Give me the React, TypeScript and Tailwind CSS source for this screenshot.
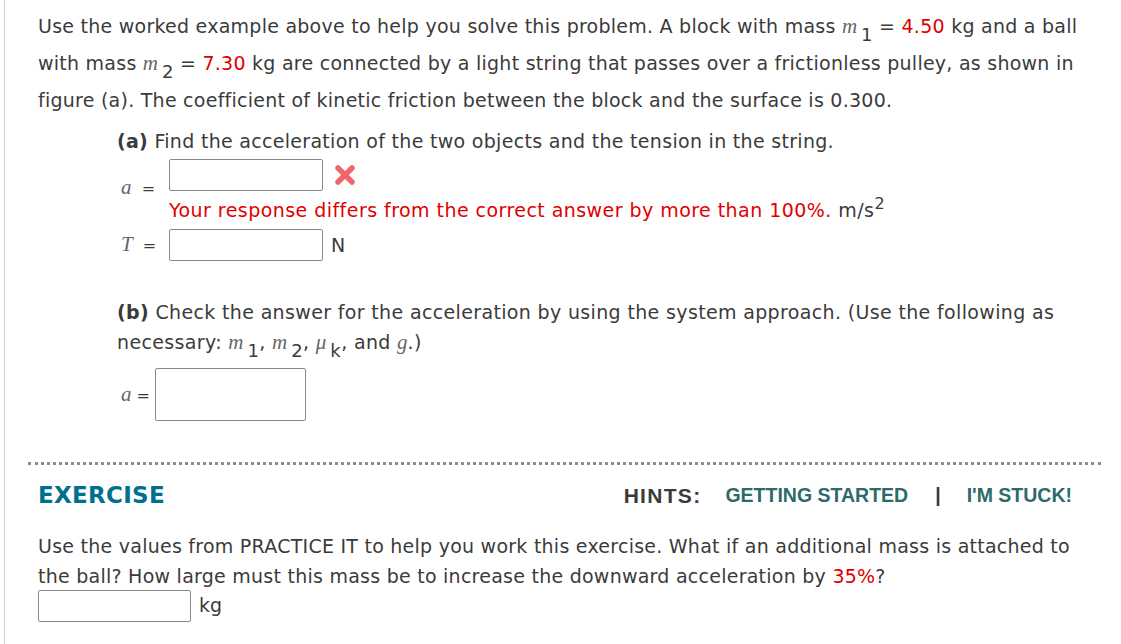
import { ReactNode } from 'react';

// Math variable, italic serif like the MathML output
function V({ children }: { children: ReactNode }) {
  return <span className="font-['Liberation_Serif',serif] italic text-[#666] text-[21px] tracking-normal">{children}</span>;
}

function Sub({ children }: { children: ReactNode }) {
  return <span className="relative top-[8px] text-[18px] ml-[4px]">{children}</span>;
}

function Red({ children }: { children: ReactNode }) {
  return <span className="text-[#e00000]">{children}</span>;
}

function Box({ className = '' }: { className?: string }) {
  return <span className={`inline-block border border-[#8a8a8a] rounded-[2px] bg-white ${className}`} />;
}

function XMark() {
  return (
    <svg width="24" height="22" viewBox="0 0 24 22">
      <path d="M5 4 L19 18 M19 4 L5 18" stroke="#f0666b" strokeWidth="5.5" strokeLinecap="round" />
    </svg>
  );
}

export default function App() {
  return (
    <div className="w-[1121px] h-[644px] bg-white overflow-hidden font-['DejaVu_Sans',sans-serif] text-[19px] text-[#3b3b3b] whitespace-nowrap">
      <div className="ml-[4px] h-full border-l border-[#cfcfcf] pl-[33px] pt-[8px]">
        <p className="leading-[37px] tracking-[0.25px]">
          Use the worked example above to help you solve this problem. A block with mass <V>m</V><Sub>1</Sub> = <Red>4.50</Red> kg and a ball
          <br />
          with mass <V>m</V><Sub>2</Sub> = <Red>7.30</Red> kg are connected by a light string that passes over a frictionless pulley, as shown in
          <br />
          figure (a). The coefficient of kinetic friction between the block and the surface is 0.300.
        </p>

        <div className="pl-[79px] mt-[7px]">
          <p className="leading-[30px] tracking-[0.3px]">
            <b>(a)</b> Find the acceleration of the two objects and the tension in the string.
          </p>

          <div className="flex items-start mt-[3px]">
            <div className="w-[52px] pt-[13px] text-[16px] pl-[4px]">
              <V>a</V>&nbsp;&nbsp;=
            </div>
            <div>
              <div className="flex items-center gap-[10px]">
                <Box className="w-[154px] h-[32px]" />
                <XMark />
              </div>
              <div className="leading-[28px] mt-[5px] tracking-[0.45px]">
                <Red>Your response differs from the correct answer by more than 100%.</Red> m/s<sup className="text-[16px]">2</sup>
              </div>
            </div>
          </div>

          <div className="flex items-center mt-[5px]">
            <div className="w-[52px] text-[16px] pl-[4px]">
              <V>T</V>&nbsp;&nbsp;=
            </div>
            <Box className="w-[154px] h-[32px]" />
            <span className="ml-[8px]">N</span>
          </div>

          <p className="leading-[30px] mt-[36px] tracking-[0.35px]">
            <b>(b)</b> Check the answer for the acceleration by using the system approach. (Use the following as
            <br />
            necessary: <V>m</V><Sub>1</Sub>, <V>m</V><Sub>2</Sub>, <V>μ</V><Sub>k</Sub>, and <V>g</V>.)
          </p>

          <div className="flex items-center mt-[10px]">
            <div className="w-[38px] text-[16px] pl-[4px]">
              <V>a</V> =
            </div>
            <Box className="w-[151px] h-[53px]" />
          </div>
        </div>

        <div className="mt-[41px] -ml-[10px] w-[1073px] border-t-[3px] border-dotted border-[#8c8c8c]" />

        <div className="flex items-center justify-between mt-[13px] w-[1034px]">
          <span className="font-bold text-[23px] tracking-[0.3px] text-[#00708e]">EXERCISE</span>
          <div className="flex items-center font-['Liberation_Sans',sans-serif] font-bold text-[19.5px]">
            <span className="text-[#3a3a3a] text-[21px] tracking-[1.3px]">HINTS:</span>
            <span className="ml-[24px] text-[#2d6b6b]">GETTING STARTED</span>
            <span className="ml-[27px] text-[#3a3a3a]">|</span>
            <span className="ml-[26px] text-[#2d6b6b]">I'M STUCK!</span>
          </div>
        </div>

        <p className="leading-[30px] mt-[18px] tracking-[0.25px]">
          Use the values from PRACTICE IT to help you work this exercise. What if an additional mass is attached to
          <br />
          the ball? How large must this mass be to increase the downward acceleration by <Red>35%</Red>?
        </p>
        <div className="flex items-center -mt-[1px]">
          <Box className="w-[153px] h-[32px]" />
          <span className="ml-[8px]">kg</span>
        </div>
      </div>
    </div>
  );
}
